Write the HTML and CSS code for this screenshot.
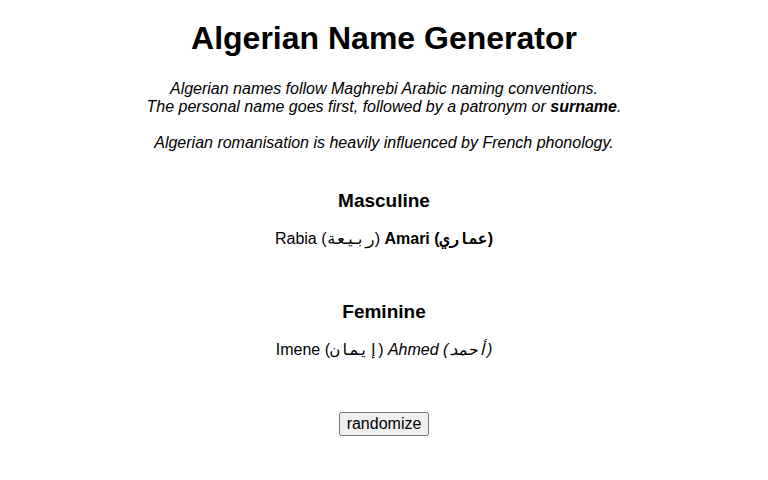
FILE: index.html
```html
<!DOCTYPE html>
<html lang="en">

<head>
     <meta charset="UTF-8" />
     <title>Algerian Name Generator</title>
     <meta name="viewport" content="width=device-width, initial-scale=1" />
     <link rel="stylesheet" href="styles.css">
</head>

<body>

     <h1>Algerian Name Generator</h1>

     <p class="intro">
          Algerian names follow Maghrebi Arabic naming conventions.<br>
          The personal name goes first, followed by a patronym or <strong>surname</strong>.<br><br>
          Algerian romanisation is heavily influenced by French phonology.
     </p>

     <section class="gender">
          <h3>Masculine</h3>
          <p class="name">Rabia (<span lang="ar">ربيعة</span>) <strong>Amari (<span lang="ar">عماري</span>)</strong></p>
     </section>

     <section class="gender">
          <h3>Feminine</h3>
          <p class="name">Imene (<span lang="ar">إيمان</span>) <em>Ahmed (<span lang="ar">أحمد</span>)</em></p>
     </section>

     <div class="actions">
          <button>randomize</button>
     </div>

</body>

</html>
```

FILE: styles.css
```css
body {
     font-family: 'Liberation Sans', Arial, sans-serif;
     color: #000;
     background: white;
     text-align: center;
     margin: 8px;
}

h1 {
     font-size: 32px;
     margin: 12px 0 23px;
}

.intro {
     font-style: italic;
     font-size: 16px;
     line-height: 18px;
     margin: 0 0 38px;
}

.gender h3 {
     font-size: 19px;
     margin: 0 0 17px;
}

.gender .name {
     font-size: 16px;
     margin: 0 0 53px;
}

.gender span[lang="ar"] {
     font-family: 'DejaVu Sans Mono', monospace;
     font-size: 16px;
}

.actions button {
     font-family: 'Liberation Sans', Arial, sans-serif;
     font-size: 16px;
     padding: 1px 6px;
}
```
